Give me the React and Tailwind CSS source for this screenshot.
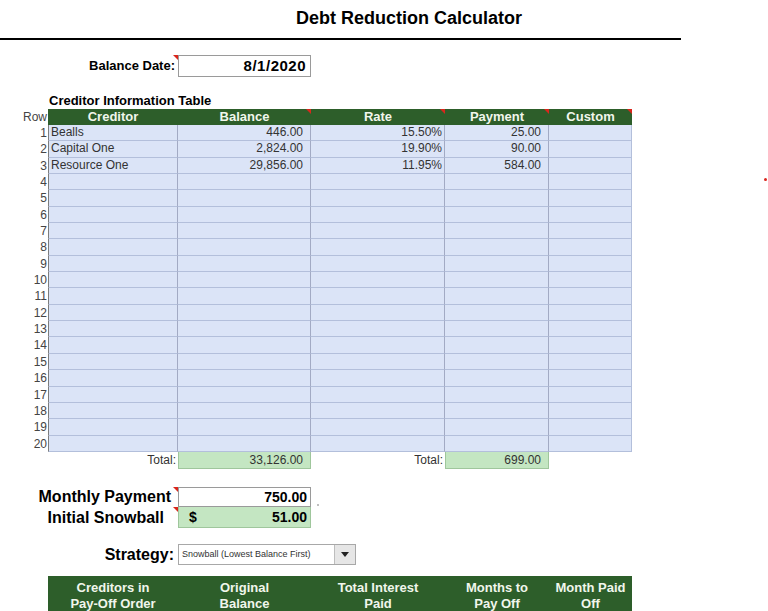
const cols = 'grid grid-cols-[28px_130px_133px_134px_104px_83px]'

const creditors = [
  { name: 'Bealls', balance: '446.00', rate: '15.50%', payment: '25.00' },
  { name: 'Capital One', balance: '2,824.00', rate: '19.90%', payment: '90.00' },
  { name: 'Resource One', balance: '29,856.00', rate: '11.95%', payment: '584.00' },
]

function Flag() {
  return (
    <span className="absolute top-0 right-0 w-0 h-0 border-l-[5px] border-l-transparent border-t-[5px] border-t-[#d9261c]" />
  )
}

function HeadCell({ children, flag }) {
  return (
    <div className="relative bg-[#2d5e2a] text-[#f1f6ec] font-bold text-[13px] leading-[16px] text-center h-[16px]">
      {children}
      {flag && <Flag />}
    </div>
  )
}

// money columns keep a little gap on the right, like Excel's "_)" format
function Cell({ children, first, last, money }) {
  return (
    <div
      className={
        'h-[16.35px] bg-[#dbe4f7] border-b border-[#b3bfdb] text-[12px] leading-[15px] text-[#333] whitespace-nowrap ' +
        (first ? 'border-l border-l-[#7d7d7d] text-left pl-[2px] ' : 'text-right ') +
        (money ? 'pr-[7px] ' : 'pr-[2px] ') +
        (last ? 'border-r border-r-[#b3bfdb]' : 'border-r border-r-[#a2aac4]')
      }
    >
      {children}
    </div>
  )
}

export default function App() {
  const rows = Array.from({ length: 20 }, (_, i) => creditors[i] || {})

  return (
    <div className="w-[768px] h-[611px] overflow-hidden bg-white font-['Liberation_Sans',Arial,sans-serif] text-black relative">
      <div className="pl-[296px] pt-[7px] h-[38px] text-[18px] leading-[22px] font-bold">Debt Reduction Calculator</div>
      <div className="w-[681px] border-b-2 border-black" />

      <div className={cols + ' ml-[20px] mt-[15px] h-[22px]'}>
        <div className="col-span-2 relative text-right pr-[3px] text-[13px] font-bold leading-[22px]">
          Balance Date:
          <Flag />
        </div>
        <div className="border border-[#9a9a9a] text-right pr-[4px] text-[15px] font-bold leading-[20px] tracking-[0.5px]">8/1/2020</div>
      </div>

      <div className="pl-[49px] mt-[15px] text-[13px] font-bold leading-[17px]">Creditor Information Table</div>

      <div className={cols + ' ml-[20px]'}>
        <div className="text-right text-[12px] leading-[16px] text-[#444] pr-[1px]">Row</div>
        <HeadCell>Creditor</HeadCell>
        <HeadCell flag>Balance</HeadCell>
        <HeadCell flag>Rate</HeadCell>
        <HeadCell flag>Payment</HeadCell>
        <HeadCell flag>Custom</HeadCell>

        {rows.map((r, i) => [
          <div key={'n' + i} className="h-[16.35px] text-right text-[12px] leading-[16px] text-[#444] pr-[1px]">{i + 1}</div>,
          <Cell key={'c' + i} first>{r.name}</Cell>,
          <Cell key={'b' + i} money>{r.balance}</Cell>,
          <Cell key={'r' + i}>{r.rate}</Cell>,
          <Cell key={'p' + i} money>{r.payment}</Cell>,
          <Cell key={'x' + i} last />,
        ])}

        <div />
        <div className="text-right pr-[2px] text-[12px] leading-[17px] text-[#333]">Total:</div>
        <div className="h-[17px] bg-[#c4e6c2] border border-t-0 border-[#9fc69c] text-right pr-[7px] text-[12px] leading-[16px] text-[#333]">33,126.00</div>
        <div className="text-right pr-[2px] text-[12px] leading-[17px] text-[#333]">Total:</div>
        <div className="h-[17px] bg-[#c4e6c2] border border-t-0 border-[#9fc69c] text-right pr-[7px] text-[12px] leading-[16px] text-[#333]">699.00</div>
        <div />
      </div>

      <div className={cols + ' ml-[20px] mt-[18px]'}>
        <div className="col-span-2 relative text-right pr-[7px] text-[16px] font-bold leading-[20px]">
          Monthly Payment
          <Flag />
        </div>
        <div className="relative h-[20px] border border-[#9a9a9a] text-right pr-[3px] text-[14px] font-bold leading-[18px]">
          750.00
          <span className="absolute -right-[9px] top-[16px] w-[2px] h-[2px] rounded-full bg-[#aaa]" />
        </div>
        <div className="col-span-3" />

        <div className="col-span-2 relative text-right pr-[14px] text-[16px] font-bold leading-[21px]">
          Initial Snowball
          <Flag />
        </div>
        <div className="h-[21px] bg-[#c4e6c2] border border-t-0 border-[#9fc69c] flex justify-between pl-[10px] pr-[3px] text-[14px] font-bold leading-[20px]">
          <span>$</span>
          <span>51.00</span>
        </div>
      </div>

      <div className="flex ml-[20px] mt-[16px] h-[21px]">
        <div className="w-[158px] text-right pr-[4px] text-[16px] font-bold leading-[21px]">Strategy:</div>
        <div className="w-[178px] flex border border-[#a8a8a8] bg-white">
          <div className="flex-1 text-[9px] leading-[19px] pl-[3px] text-[#333]">Snowball (Lowest Balance First)</div>
          <div className="w-[21px] bg-[#e6e6e6] border-l border-[#bdbdbd] flex items-center justify-center">
            <span className="w-0 h-0 border-l-[4px] border-r-[4px] border-t-[5px] border-l-transparent border-r-transparent border-t-[#222]" />
          </div>
        </div>
      </div>

      <div className={cols + ' ml-[20px] mt-[11px]'}>
        <div />
        <div className="col-span-5 grid grid-cols-[130px_133px_134px_104px_83px] bg-[#2d5e2a] text-[#f1f6ec] font-bold text-[13px] leading-[16px] text-center pt-[4px] pb-[6px]">
          <div>Creditors in<br />Pay-Off Order</div>
          <div>Original<br />Balance</div>
          <div>Total Interest<br />Paid</div>
          <div>Months to<br />Pay Off</div>
          <div>Month Paid<br />Off</div>
        </div>
      </div>

      <span className="absolute left-[764px] top-[178px] w-[3px] h-[3px] rounded-full bg-[#d9261c]" />
    </div>
  )
}
